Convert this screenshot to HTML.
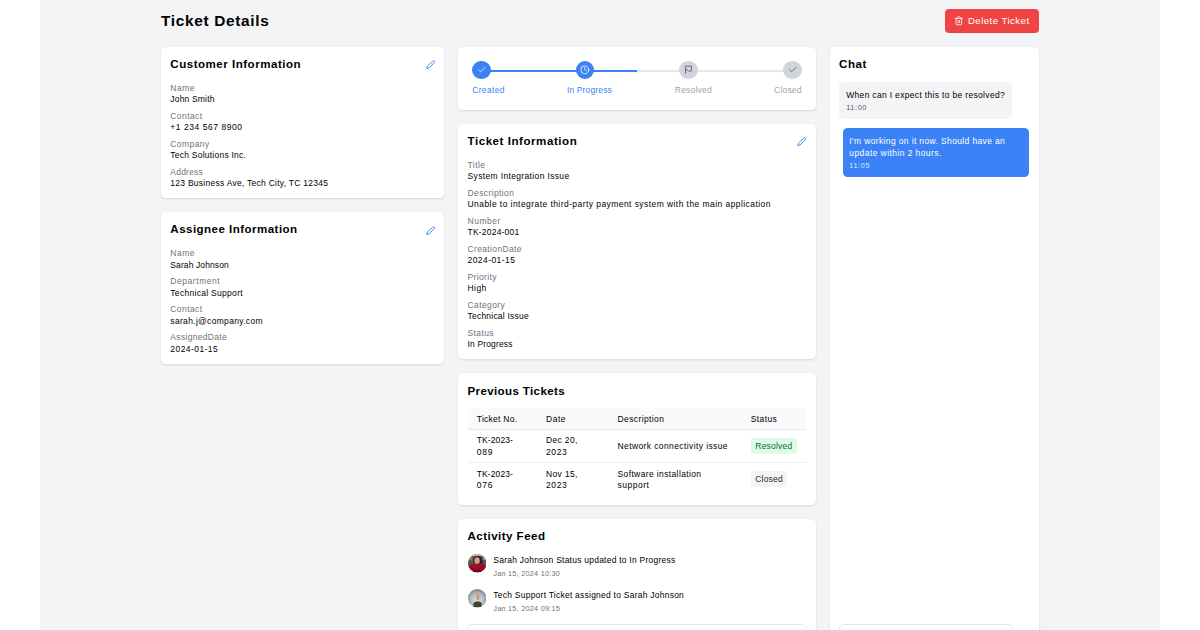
<!DOCTYPE html>
<html><head><meta charset="utf-8"><title>Ticket Details</title>
<style>
html,body{margin:0;padding:0;width:1200px;height:630px;overflow:hidden;background:#fff;}
body{position:relative;font-family:"Liberation Sans", sans-serif;}
.t{position:absolute;white-space:nowrap;line-height:0;}
.r{position:absolute;display:block;}
</style></head><body>
<div class="r" style="left:40.00px;top:0.00px;width:1120.00px;height:630.00px;background:#f3f4f6;"></div>
<div class="t" style="left:161.00px;top:20.67px;font-size:15.400px;color:#000;font-family:'Liberation Sans', sans-serif;font-weight:700;letter-spacing:0.684px;">Ticket Details</div>
<div class="r" style="left:945.00px;top:9.00px;width:93.70px;height:23.70px;background:#ef4444;border-radius:4px;"></div>
<svg class="r" style="left:954.1px;top:16.3px" width="9.6" height="9.6" viewBox="0 0 24 24" fill="none" stroke="#fff" stroke-width="2" stroke-linecap="round" stroke-linejoin="round"><path d="M3 6h18"/><path d="M19 6v14c0 1-1 2-2 2H7c-1 0-2-1-2-2V6"/><path d="M8 6V4c0-1 1-2 2-2h4c1 0 2 1 2 2v2"/><line x1="10" y1="11" x2="10" y2="17"/><line x1="14" y1="11" x2="14" y2="17"/></svg>
<div class="t" style="left:967.90px;top:21.14px;font-size:9.706px;color:#fff;font-family:'Liberation Sans', sans-serif;letter-spacing:0.435px;">Delete Ticket</div>
<div class="r" style="left:161.00px;top:46.70px;width:283.20px;height:151.30px;background:#fff;border-radius:4.67px;box-shadow:0 1px 3px rgba(0,0,0,0.08),0 0.6px 1.5px rgba(0,0,0,0.05);"></div>
<div class="t" style="left:170.33px;top:63.80px;font-size:11.550px;color:#000;font-family:'Liberation Sans', sans-serif;font-weight:700;letter-spacing:0.507px;">Customer Information</div>
<svg class="r" style="left:425.70px;top:59.90px" width="9.4" height="9.4" viewBox="0 0 24 24" fill="none" stroke="#3b82f6" stroke-width="2.4" stroke-linecap="round" stroke-linejoin="round"><path d="M17 3a2.85 2.83 0 1 1 4 4L7.5 20.5 2 22l1.5-5.5Z"/></svg>
<div class="t" style="left:170.33px;top:87.76px;font-size:8.493px;color:#6b7280;font-family:'Liberation Sans', sans-serif;letter-spacing:0.479px;">Name</div>
<div class="t" style="left:170.33px;top:99.26px;font-size:8.493px;color:#000;font-family:'Liberation Sans', sans-serif;letter-spacing:0.182px;">John Smith</div>
<div class="t" style="left:170.33px;top:115.76px;font-size:8.493px;color:#6b7280;font-family:'Liberation Sans', sans-serif;letter-spacing:0.414px;">Contact</div>
<div class="t" style="left:170.33px;top:127.26px;font-size:8.493px;color:#000;font-family:'Liberation Sans', sans-serif;letter-spacing:0.555px;">+1 234 567 8900</div>
<div class="t" style="left:170.33px;top:143.76px;font-size:8.493px;color:#6b7280;font-family:'Liberation Sans', sans-serif;letter-spacing:0.417px;">Company</div>
<div class="t" style="left:170.33px;top:155.26px;font-size:8.493px;color:#000;font-family:'Liberation Sans', sans-serif;letter-spacing:0.243px;">Tech Solutions Inc.</div>
<div class="t" style="left:170.33px;top:171.76px;font-size:8.493px;color:#6b7280;font-family:'Liberation Sans', sans-serif;letter-spacing:0.227px;">Address</div>
<div class="t" style="left:170.33px;top:183.26px;font-size:8.493px;color:#000;font-family:'Liberation Sans', sans-serif;letter-spacing:0.269px;">123 Business Ave, Tech City, TC 12345</div>
<div class="r" style="left:161.00px;top:212.30px;width:283.20px;height:151.30px;background:#fff;border-radius:4.67px;box-shadow:0 1px 3px rgba(0,0,0,0.08),0 0.6px 1.5px rgba(0,0,0,0.05);"></div>
<div class="t" style="left:170.33px;top:229.40px;font-size:11.550px;color:#000;font-family:'Liberation Sans', sans-serif;font-weight:700;letter-spacing:0.460px;">Assignee Information</div>
<svg class="r" style="left:425.70px;top:225.50px" width="9.4" height="9.4" viewBox="0 0 24 24" fill="none" stroke="#3b82f6" stroke-width="2.4" stroke-linecap="round" stroke-linejoin="round"><path d="M17 3a2.85 2.83 0 1 1 4 4L7.5 20.5 2 22l1.5-5.5Z"/></svg>
<div class="t" style="left:170.33px;top:253.36px;font-size:8.493px;color:#6b7280;font-family:'Liberation Sans', sans-serif;letter-spacing:0.479px;">Name</div>
<div class="t" style="left:170.33px;top:264.86px;font-size:8.493px;color:#000;font-family:'Liberation Sans', sans-serif;letter-spacing:0.113px;">Sarah Johnson</div>
<div class="t" style="left:170.33px;top:281.36px;font-size:8.493px;color:#6b7280;font-family:'Liberation Sans', sans-serif;letter-spacing:0.559px;">Department</div>
<div class="t" style="left:170.33px;top:292.86px;font-size:8.493px;color:#000;font-family:'Liberation Sans', sans-serif;letter-spacing:0.303px;">Technical Support</div>
<div class="t" style="left:170.33px;top:309.36px;font-size:8.493px;color:#6b7280;font-family:'Liberation Sans', sans-serif;letter-spacing:0.414px;">Contact</div>
<div class="t" style="left:170.33px;top:320.86px;font-size:8.493px;color:#000;font-family:'Liberation Sans', sans-serif;letter-spacing:0.332px;">sarah.j@company.com</div>
<div class="t" style="left:170.33px;top:337.36px;font-size:8.493px;color:#6b7280;font-family:'Liberation Sans', sans-serif;letter-spacing:0.324px;">AssignedDate</div>
<div class="t" style="left:170.33px;top:348.86px;font-size:8.493px;color:#000;font-family:'Liberation Sans', sans-serif;letter-spacing:0.444px;">2024-01-15</div>
<div class="r" style="left:458.20px;top:47.00px;width:357.50px;height:62.60px;background:#fff;border-radius:4.67px;box-shadow:0 1px 3px rgba(0,0,0,0.08),0 0.6px 1.5px rgba(0,0,0,0.05);"></div>
<div class="r" style="left:481.53px;top:70.10px;width:310.80px;height:1.90px;background:#e5e7eb;"></div>
<div class="r" style="left:481.53px;top:70.10px;width:155.57px;height:1.90px;background:#3b82f6;"></div>
<div class="r" style="left:472.20px;top:60.66px;width:18.67px;height:18.67px;background:#3b82f6;border-radius:50%;"></div>
<div class="r" style="left:575.80px;top:60.66px;width:18.67px;height:18.67px;background:#3b82f6;border-radius:50%;"></div>
<div class="r" style="left:679.40px;top:60.66px;width:18.67px;height:18.67px;background:#d1d5db;border-radius:50%;"></div>
<div class="r" style="left:783.00px;top:60.66px;width:18.67px;height:18.67px;background:#d1d5db;border-radius:50%;"></div>
<svg class="r" style="left:476.73px;top:65.20px" width="9.6" height="9.6" viewBox="0 0 24 24" fill="none" stroke="#fff" stroke-width="2" stroke-linecap="round" stroke-linejoin="round"><path d="M19.5 6.5 9 17l-5-5"/></svg>
<svg class="r" style="left:580.34px;top:65.20px" width="9.6" height="9.6" viewBox="0 0 24 24" fill="none" stroke="#fff" stroke-width="2" stroke-linecap="round" stroke-linejoin="round"><circle cx="12" cy="12" r="10"/><polyline points="12 6 12 12 16 14"/></svg>
<svg class="r" style="left:683.94px;top:65.20px" width="9.6" height="9.6" viewBox="0 0 24 24" fill="none" stroke="#4b5563" stroke-width="2" stroke-linecap="round" stroke-linejoin="round"><path d="M3.8 21V2.9H18.6V15.3H11.2L8.2 12.3H3.8"/></svg>
<svg class="r" style="left:787.54px;top:65.20px" width="9.6" height="9.6" viewBox="0 0 24 24" fill="none" stroke="#4b5563" stroke-width="2" stroke-linecap="round" stroke-linejoin="round"><path d="M20 6 9 17l-5-5"/></svg>
<div class="t" style="left:472.20px;top:89.76px;font-size:8.493px;color:#3b82f6;font-family:'Liberation Sans', sans-serif;letter-spacing:0.349px;">Created</div>
<div class="t" style="left:566.90px;top:89.76px;font-size:8.493px;color:#3b82f6;font-family:'Liberation Sans', sans-serif;letter-spacing:0.159px;">In Progress</div>
<div class="t" style="left:674.80px;top:89.76px;font-size:8.493px;color:#9ca3af;font-family:'Liberation Sans', sans-serif;letter-spacing:0.212px;">Resolved</div>
<div class="t" style="left:774.10px;top:89.76px;font-size:8.493px;color:#9ca3af;font-family:'Liberation Sans', sans-serif;letter-spacing:0.197px;">Closed</div>
<div class="r" style="left:458.20px;top:123.80px;width:357.50px;height:235.30px;background:#fff;border-radius:4.67px;box-shadow:0 1px 3px rgba(0,0,0,0.08),0 0.6px 1.5px rgba(0,0,0,0.05);"></div>
<div class="t" style="left:467.53px;top:140.90px;font-size:11.550px;color:#000;font-family:'Liberation Sans', sans-serif;font-weight:700;letter-spacing:0.547px;">Ticket Information</div>
<svg class="r" style="left:797.20px;top:137.00px" width="9.4" height="9.4" viewBox="0 0 24 24" fill="none" stroke="#3b82f6" stroke-width="2.4" stroke-linecap="round" stroke-linejoin="round"><path d="M17 3a2.85 2.83 0 1 1 4 4L7.5 20.5 2 22l1.5-5.5Z"/></svg>
<div class="t" style="left:467.53px;top:164.86px;font-size:8.493px;color:#6b7280;font-family:'Liberation Sans', sans-serif;letter-spacing:0.441px;">Title</div>
<div class="t" style="left:467.53px;top:176.36px;font-size:8.493px;color:#000;font-family:'Liberation Sans', sans-serif;letter-spacing:0.359px;">System Integration Issue</div>
<div class="t" style="left:467.53px;top:192.86px;font-size:8.493px;color:#6b7280;font-family:'Liberation Sans', sans-serif;letter-spacing:0.400px;">Description</div>
<div class="t" style="left:467.53px;top:204.36px;font-size:8.493px;color:#000;font-family:'Liberation Sans', sans-serif;letter-spacing:0.441px;">Unable to integrate third-party payment system with the main application</div>
<div class="t" style="left:467.53px;top:220.86px;font-size:8.493px;color:#6b7280;font-family:'Liberation Sans', sans-serif;letter-spacing:0.516px;">Number</div>
<div class="t" style="left:467.53px;top:232.36px;font-size:8.493px;color:#000;font-family:'Liberation Sans', sans-serif;letter-spacing:0.216px;">TK-2024-001</div>
<div class="t" style="left:467.53px;top:248.86px;font-size:8.493px;color:#6b7280;font-family:'Liberation Sans', sans-serif;letter-spacing:0.365px;">CreationDate</div>
<div class="t" style="left:467.53px;top:260.36px;font-size:8.493px;color:#000;font-family:'Liberation Sans', sans-serif;letter-spacing:0.444px;">2024-01-15</div>
<div class="t" style="left:467.53px;top:276.86px;font-size:8.493px;color:#6b7280;font-family:'Liberation Sans', sans-serif;letter-spacing:0.375px;">Priority</div>
<div class="t" style="left:467.53px;top:288.36px;font-size:8.493px;color:#000;font-family:'Liberation Sans', sans-serif;letter-spacing:0.432px;">High</div>
<div class="t" style="left:467.53px;top:304.86px;font-size:8.493px;color:#6b7280;font-family:'Liberation Sans', sans-serif;letter-spacing:0.404px;">Category</div>
<div class="t" style="left:467.53px;top:316.36px;font-size:8.493px;color:#000;font-family:'Liberation Sans', sans-serif;letter-spacing:0.223px;">Technical Issue</div>
<div class="t" style="left:467.53px;top:332.86px;font-size:8.493px;color:#6b7280;font-family:'Liberation Sans', sans-serif;letter-spacing:0.388px;">Status</div>
<div class="t" style="left:467.53px;top:344.36px;font-size:8.493px;color:#000;font-family:'Liberation Sans', sans-serif;letter-spacing:0.159px;">In Progress</div>
<div class="r" style="left:458.20px;top:373.30px;width:357.50px;height:131.60px;background:#fff;border-radius:4.67px;box-shadow:0 1px 3px rgba(0,0,0,0.08),0 0.6px 1.5px rgba(0,0,0,0.05);"></div>
<div class="t" style="left:467.53px;top:390.50px;font-size:11.550px;color:#000;font-family:'Liberation Sans', sans-serif;font-weight:700;letter-spacing:0.370px;">Previous Tickets</div>
<div class="r" style="left:467.50px;top:408.00px;width:338.80px;height:21.30px;background:#f9fafb;"></div>
<div class="r" style="left:467.50px;top:429.30px;width:338.80px;height:0.70px;background:#e5e7eb;"></div>
<div class="r" style="left:467.50px;top:462.20px;width:338.80px;height:0.70px;background:#eceef1;"></div>
<div class="t" style="left:476.80px;top:418.96px;font-size:8.493px;color:#000;font-family:'Liberation Sans', sans-serif;letter-spacing:0.266px;">Ticket No.</div>
<div class="t" style="left:546.00px;top:418.96px;font-size:8.493px;color:#000;font-family:'Liberation Sans', sans-serif;letter-spacing:0.526px;">Date</div>
<div class="t" style="left:617.50px;top:418.96px;font-size:8.493px;color:#000;font-family:'Liberation Sans', sans-serif;letter-spacing:0.400px;">Description</div>
<div class="t" style="left:750.80px;top:418.96px;font-size:8.493px;color:#000;font-family:'Liberation Sans', sans-serif;letter-spacing:0.388px;">Status</div>
<div class="t" style="left:476.80px;top:440.36px;font-size:8.493px;color:#000;font-family:'Liberation Sans', sans-serif;letter-spacing:0.107px;">TK-2023-</div>
<div class="t" style="left:476.80px;top:451.76px;font-size:8.493px;color:#000;font-family:'Liberation Sans', sans-serif;letter-spacing:0.711px;">089</div>
<div class="t" style="left:546.00px;top:440.36px;font-size:8.493px;color:#000;font-family:'Liberation Sans', sans-serif;letter-spacing:0.352px;">Dec 20,</div>
<div class="t" style="left:546.00px;top:451.76px;font-size:8.493px;color:#000;font-family:'Liberation Sans', sans-serif;letter-spacing:0.630px;">2023</div>
<div class="t" style="left:617.50px;top:446.06px;font-size:8.493px;color:#000;font-family:'Liberation Sans', sans-serif;letter-spacing:0.405px;">Network connectivity issue</div>
<div class="r" style="left:751.30px;top:438.00px;width:45.40px;height:15.80px;background:#dcfce7;border-radius:2.5px;"></div>
<div class="t" style="left:755.30px;top:445.86px;font-size:8.493px;color:#166534;font-family:'Liberation Sans', sans-serif;letter-spacing:0.212px;">Resolved</div>
<div class="t" style="left:476.80px;top:473.76px;font-size:8.493px;color:#000;font-family:'Liberation Sans', sans-serif;letter-spacing:0.107px;">TK-2023-</div>
<div class="t" style="left:476.80px;top:485.16px;font-size:8.493px;color:#000;font-family:'Liberation Sans', sans-serif;letter-spacing:0.711px;">076</div>
<div class="t" style="left:546.00px;top:473.76px;font-size:8.493px;color:#000;font-family:'Liberation Sans', sans-serif;letter-spacing:0.372px;">Nov 15,</div>
<div class="t" style="left:546.00px;top:485.16px;font-size:8.493px;color:#000;font-family:'Liberation Sans', sans-serif;letter-spacing:0.630px;">2023</div>
<div class="t" style="left:617.50px;top:473.76px;font-size:8.493px;color:#000;font-family:'Liberation Sans', sans-serif;letter-spacing:0.383px;">Software installation</div>
<div class="t" style="left:617.50px;top:485.16px;font-size:8.493px;color:#000;font-family:'Liberation Sans', sans-serif;letter-spacing:0.503px;">support</div>
<div class="r" style="left:751.30px;top:471.30px;width:36.20px;height:16.20px;background:#f3f4f6;border-radius:2.5px;"></div>
<div class="t" style="left:755.30px;top:479.26px;font-size:8.493px;color:#1f2937;font-family:'Liberation Sans', sans-serif;letter-spacing:0.197px;">Closed</div>
<div class="r" style="left:458.20px;top:519.10px;width:357.50px;height:120.90px;background:#fff;border-radius:4.67px;box-shadow:0 1px 3px rgba(0,0,0,0.08),0 0.6px 1.5px rgba(0,0,0,0.05);"></div>
<div class="t" style="left:467.53px;top:536.10px;font-size:11.550px;color:#000;font-family:'Liberation Sans', sans-serif;font-weight:700;letter-spacing:0.464px;">Activity Feed</div>
<svg class="r" style="left:467.7px;top:554.1px" width="18.5" height="18.5" viewBox="0 0 20 20"><defs><clipPath id="c1"><circle cx="10" cy="10" r="10"/></clipPath><linearGradient id="g1" x1="0" y1="0" x2="0" y2="1"><stop offset="0" stop-color="#6d6a68"/><stop offset="0.5" stop-color="#55565a"/><stop offset="1" stop-color="#50545a"/></linearGradient><linearGradient id="s1" x1="0" y1="0" x2="0" y2="1"><stop offset="0" stop-color="#a8102a"/><stop offset="0.7" stop-color="#8a0a20"/><stop offset="1" stop-color="#4a0612"/></linearGradient></defs><g clip-path="url(#c1)"><rect width="20" height="20" fill="url(#g1)"/><rect x="3" y="0" width="14" height="2.2" fill="#b7b9bb"/><rect x="0" y="3.5" width="4" height="3" fill="#c9a27a" opacity="0.6"/><rect x="16" y="3.5" width="4" height="3" fill="#d6b08a" opacity="0.6"/><path d="M5.6 7.5 C5.6 2.8 8 2.2 10.5 2.2 C13.5 2.2 15.8 3.5 15.8 8 L16.2 12 L13 12.5 L7 12 Z" fill="#2f2320"/><ellipse cx="9.8" cy="7.3" rx="2.9" ry="3.7" fill="#d4a088"/><path d="M0 20 L0.8 12.5 C3 10.8 6 10.6 10 10.6 C14 10.6 17 10.8 19.2 12.5 L20 20 Z" fill="url(#s1)"/></g></svg>
<svg class="r" style="left:467.7px;top:589.0px" width="18.5" height="18.5" viewBox="0 0 20 20"><defs><clipPath id="c2"><circle cx="10" cy="10" r="10"/></clipPath><radialGradient id="g2" cx="0.5" cy="0.6" r="0.6"><stop offset="0" stop-color="#e4e4e4"/><stop offset="0.6" stop-color="#b6b9bc"/><stop offset="1" stop-color="#7c8186"/></radialGradient></defs><g clip-path="url(#c2)"><rect width="20" height="20" fill="url(#g2)"/><ellipse cx="10.7" cy="8.8" rx="1.8" ry="3.6" fill="#c99a80"/><path d="M5.6 20 L6 15.5 C6.5 14 8.5 13.4 10.6 13.4 C12.8 13.4 14.2 14 14.6 15.5 L14.9 20 Z" fill="#3b432e"/></g></svg>
<div class="t" style="left:493.30px;top:559.96px;font-size:8.493px;color:#000;font-family:'Liberation Sans', sans-serif;letter-spacing:0.243px;">Sarah Johnson Status updated to In Progress</div>
<div class="t" style="left:493.30px;top:574.18px;font-size:7.280px;color:#6b7280;font-family:'Liberation Sans', sans-serif;letter-spacing:0.257px;">Jan 15, 2024 10:30</div>
<div class="t" style="left:493.30px;top:595.16px;font-size:8.493px;color:#000;font-family:'Liberation Sans', sans-serif;letter-spacing:0.246px;">Tech Support Ticket assigned to Sarah Johnson</div>
<div class="t" style="left:493.30px;top:609.18px;font-size:7.280px;color:#6b7280;font-family:'Liberation Sans', sans-serif;letter-spacing:0.257px;">Jan 15, 2024 09:15</div>
<div class="r" style="left:467.30px;top:624.00px;width:339.60px;height:36.00px;border:1px solid #e5e7eb;border-radius:4.67px;box-sizing:border-box;background:#fff;"></div>
<div class="r" style="left:829.70px;top:47.00px;width:209.00px;height:593.00px;background:#fff;border-radius:4.67px;box-shadow:0 1px 3px rgba(0,0,0,0.08),0 0.6px 1.5px rgba(0,0,0,0.05);"></div>
<div class="t" style="left:839.00px;top:63.80px;font-size:11.550px;color:#000;font-family:'Liberation Sans', sans-serif;font-weight:700;letter-spacing:0.542px;">Chat</div>
<div class="r" style="left:839.20px;top:81.70px;width:172.50px;height:37.30px;background:#f3f4f6;border-radius:4.67px;"></div>
<div class="t" style="left:846.20px;top:94.66px;font-size:8.493px;color:#000;font-family:'Liberation Sans', sans-serif;letter-spacing:0.333px;">When can I expect this to be resolved?</div>
<div class="t" style="left:846.20px;top:108.08px;font-size:7.280px;color:#555;font-family:'Liberation Sans', sans-serif;letter-spacing:0.633px;">11:00</div>
<div class="r" style="left:842.90px;top:128.20px;width:186.40px;height:48.60px;background:#3b82f6;border-radius:4.67px;"></div>
<div class="t" style="left:849.30px;top:141.36px;font-size:8.493px;color:#fff;font-family:'Liberation Sans', sans-serif;letter-spacing:0.371px;">I'm working on it now. Should have an</div>
<div class="t" style="left:849.30px;top:153.06px;font-size:8.493px;color:#fff;font-family:'Liberation Sans', sans-serif;letter-spacing:0.427px;">update within 2 hours.</div>
<div class="t" style="left:849.30px;top:166.28px;font-size:7.280px;color:#dbeafe;font-family:'Liberation Sans', sans-serif;letter-spacing:0.633px;">11:05</div>
<div class="r" style="left:839.30px;top:623.90px;width:173.70px;height:36.10px;border:1px solid #e5e7eb;border-radius:4.67px;box-sizing:border-box;background:#fff;"></div>
</body></html>
